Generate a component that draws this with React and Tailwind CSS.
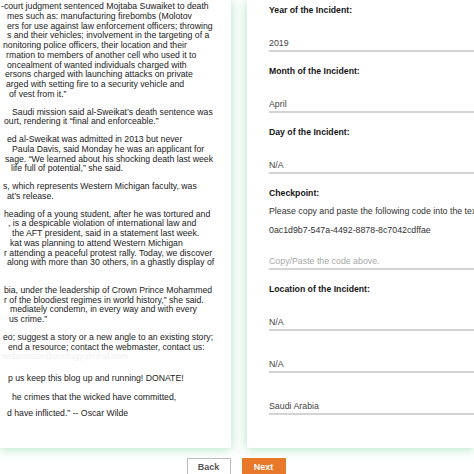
import React from "react";

const article = [
  {
    gap: "",
    lines: [
      ["pl-[1px]", "-court judgment sentenced Mojtaba Suwaiket to death"],
      ["pl-[7px]", "mes such as: manufacturing firebombs (Molotov"],
      ["pl-[7px]", "ers for use against law enforcement officers; throwing"],
      ["pl-[7px]", "s and their vehicles; involvement in the targeting of a"],
      ["pl-[3px]", "nonitoring police officers, their location and their"],
      ["pl-[6px]", "rmation to members of another cell who used it to"],
      ["pl-[7px]", "oncealment of wanted individuals charged with"],
      ["pl-[5px]", "ersons charged with launching attacks on private"],
      ["pl-[6px]", "arged with setting fire to a security vehicle and"],
      ["pl-[9px]", "of vest from it.\u201d"],
    ],
  },
  {
    gap: "mt-[8px]",
    lines: [
      ["pl-[12px]", "Saudi mission said al-Sweikat\u2019s death sentence was"],
      ["pl-[4px]", "ourt, rendering it \u201cfinal and enforceable.\u201d"],
    ],
  },
  {
    gap: "mt-[8px]",
    lines: [
      ["pl-[7px]", "ed al-Sweikat was admitted in 2013 but never"],
      ["pl-[12px]", "Paula Davis, said Monday he was an applicant for"],
      ["pl-[5px]", "sage. \u201cWe learned about his shocking death last week"],
      ["pl-[11px]", "life full of potential,\u201d she said."],
    ],
  },
  {
    gap: "mt-[8px]",
    lines: [
      ["pl-[3px]", "s, which represents Western Michigan faculty, was"],
      ["pl-[7px]", "at\u2019s release."],
    ],
  },
  {
    gap: "mt-[8px]",
    lines: [
      ["pl-[4px]", "heading of a young student, after he was tortured and"],
      ["pl-[8px]", ", is a despicable violation of international law and"],
      ["pl-[12px]", "the AFT president, said in a statement last week."],
      ["pl-[10px]", "kat was planning to attend Western Michigan"],
      ["pl-[4px]", "r attending a peaceful protest rally. Today, we discover"],
      ["pl-[7px]", "along with more than 30 others, in a ghastly display of"],
      ["pl-[7px]", "\u00a0"],
    ],
  },
  {
    gap: "mt-[8px]",
    lines: [
      ["pl-[4px]", "bia, under the leadership of Crown Prince Mohammed"],
      ["pl-[4px]", "r of the bloodiest regimes in world history,\u201d she said."],
      ["pl-[10px]", "mediately condemn, in every way and with every"],
      ["pl-[9px]", "us crime.\u201d"],
    ],
  },
  {
    gap: "mt-[8px]",
    lines: [
      ["pl-[3px]", "eo; suggest a story or a new angle to an existing story;"],
      ["pl-[8px]", "end a resource; contact the webmaster, contact us:"],
    ],
  },
];

function Field({ label, value, placeholder, first }) {
  return (
    <div className={first ? "" : "mt-[14px]"}>
      {label && (
        <div className="font-bold text-[8.7px] h-[10px] leading-[10px] mb-[9px] text-[#151515] whitespace-nowrap">
          {label}
        </div>
      )}
      <div className="h-[28px] border-b-2 border-[#d3d3d3] flex items-end pb-[2px] leading-[10px]">
        {value ? (
          <span className="text-[#444]">{value}</span>
        ) : (
          <span className="text-[#a8a8a8]">{placeholder}</span>
        )}
      </div>
    </div>
  );
}

export default function App() {
  return (
    <div className="w-[474px] h-[474px] overflow-hidden bg-white font-['Liberation_Sans',Arial,sans-serif]">
      <div className="flex gap-[16px] items-stretch">
        {/* article card */}
        <div className="w-[231px] shrink-0 bg-white shadow-[0_1px_10px_rgba(95,200,140,0.5)] overflow-hidden pt-[2px] text-[8.7px] leading-[9.75px] text-[#222]">
          {article.map((p, i) => (
            <div key={i} className={p.gap}>
              {p.lines.map(([pad, t], j) => (
                <div key={j} className={"whitespace-nowrap " + pad}>
                  {t}
                </div>
              ))}
            </div>
          ))}
          <div className="pl-[2px] whitespace-nowrap text-[#f0f0f0]">
            webmaster@ecologyofmind.com
          </div>
          <div className="mt-[12px] pl-[8px] whitespace-nowrap">
            p us keep this blog up and running! DONATE!
          </div>
          <div className="mt-[9px] pl-[12px] whitespace-nowrap">
            he crimes that the wicked have committed,
          </div>
          <div className="mt-[6px] pl-[7px] whitespace-nowrap">
            d have inflicted.&rdquo; -- Oscar Wilde
          </div>
        </div>

        {/* incident form card */}
        <div className="flex-1 min-w-0 overflow-hidden bg-white shadow-[0_1px_10px_rgba(95,200,140,0.5)] pl-[22px] pt-[5px] pb-[33px] text-[8.8px] whitespace-nowrap">
          <Field first label="Year of the Incident:" value="2019" />
          <Field label="Month of the Incident:" value="April" />
          <Field label="Day of the Incident:" value="N/A" />

          <div className="mt-[14px]">
            <div className="font-bold text-[8.7px] h-[10px] leading-[10px] text-[#151515]">
              Checkpoint:
            </div>
            <div className="mt-[8px] h-[10px] leading-[10px] text-[#333]">
              Please copy and paste the following code into the text box below.
            </div>
            <div className="mt-[9px] h-[10px] leading-[10px] text-[#333]">
              0ac1d9b7-547a-4492-8878-8c7042cdffae
            </div>
            <div className="mt-[7px]">
              <Field first placeholder="Copy/Paste the code above." />
            </div>
          </div>

          <Field label="Location of the Incident:" value="N/A" />
          <Field value="N/A" />
          <Field value="Saudi Arabia" />
        </div>
      </div>

      <div className="flex justify-center gap-[11px] mt-[10px] pr-[2px]">
        <button className="w-[44px] h-[18px] bg-white border border-[#bdbdbd] text-[#555] font-bold text-[9px] leading-[16px]">
          Back
        </button>
        <button className="w-[44px] h-[18px] bg-[#e8782a] text-white font-bold text-[9px] leading-[18px]">
          Next
        </button>
      </div>
    </div>
  );
}
